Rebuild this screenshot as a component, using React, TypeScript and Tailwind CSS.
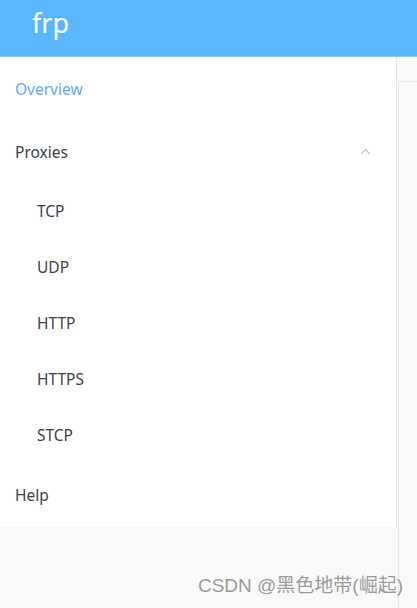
import React from "react";

const subItems = ["TCP", "UDP", "HTTP", "HTTPS", "STCP"];

const App: React.FC = () => {
  return (
    <div
      className="relative w-[417px] h-[608px] overflow-hidden bg-[#f9f9f9] flex flex-col"
      style={{ fontFamily: '"Noto Sans", "Open Sans", sans-serif' }}
    >
      <header className="h-[57px] bg-[#58b7ff] border-b border-[#8ccbff] flex items-center pl-[32px] shrink-0">
        <span className="text-white text-[27px] leading-none -mt-[12px]">frp</span>
      </header>
      <div className="flex flex-1">
        <aside className="w-[397px] shrink-0">
          <nav className="bg-white border-r border-[#e4e4e4] text-[15.5px] text-[#3b3f46]">
            <div className="h-[63px] flex items-center pl-[15px] pt-[2px] text-[#5ea8ff]">Overview</div>
            <div className="h-[63px] flex items-center justify-between pl-[15px] pr-[25px] pt-[2px]">
              <span>Proxies</span>
              <svg width="11" height="7" viewBox="0 0 11 7" fill="none" className="-mt-[2px]">
                <path d="M1 6L5.5 1.5L10 6" stroke="#b8c2cf" strokeWidth="1.2" />
              </svg>
            </div>
            {subItems.map((item) => (
              <div key={item} className="h-[56px] flex items-center pl-[37px] pt-[2px]">
                {item}
              </div>
            ))}
            <div className="h-[64px] flex items-center pl-[15px] pt-[2px]">Help</div>
          </nav>
        </aside>
        <main className="flex-1 bg-[#f9f9f9] pt-[24px] pl-px">
          <div className="h-full bg-[#f9f9f9] border-l border-t border-[#e3e8f4] rounded-tl-[4px]" />
        </main>
      </div>
      <div className="absolute right-[14px] bottom-[8px] text-[19px] text-[#9a9a9a] [text-shadow:0_0_1px_#ffffff]"
        style={{ fontFamily: '"Liberation Sans", "Noto Sans CJK SC", sans-serif' }}
      >
        CSDN @黑色地带(崛起)
      </div>
    </div>
  );
};

export default App;
